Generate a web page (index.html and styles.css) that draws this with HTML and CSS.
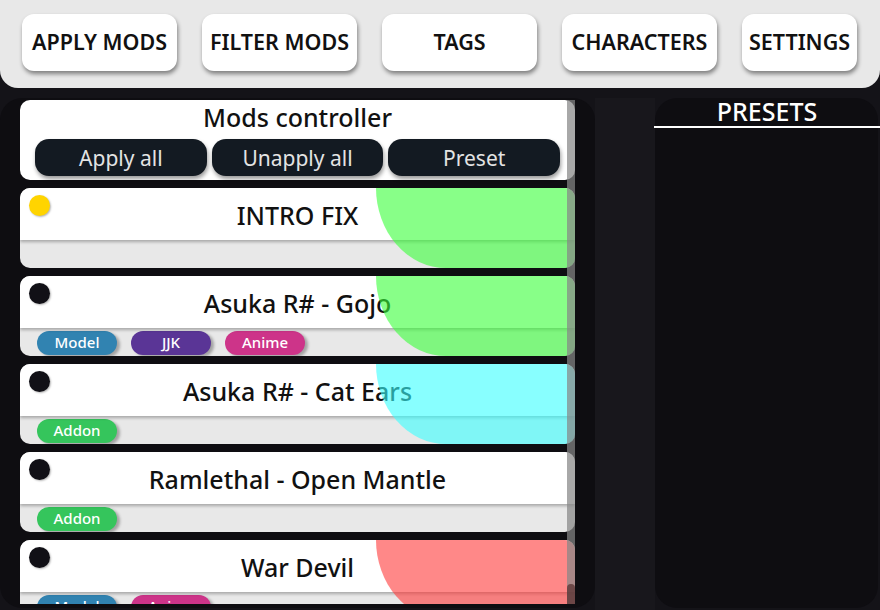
FILE: index.html
```html
<!DOCTYPE html>
<html>
<head>
<meta charset="utf-8">
<link rel="stylesheet" href="styles.css">
</head>
<body>
<header class="topbar">
  <button class="nav-btn">APPLY MODS</button>
  <button class="nav-btn">FILTER MODS</button>
  <button class="nav-btn">TAGS</button>
  <button class="nav-btn">CHARACTERS</button>
  <button class="nav-btn nav-btn-small">SETTINGS</button>
</header>
<main class="main">
  <section class="mods-panel">
    <div class="mods-list">
      <div class="controller">
        <div class="controller-title">Mods controller</div>
        <div class="controller-actions">
          <button class="ctl-btn">Apply all</button>
          <button class="ctl-btn">Unapply all</button>
          <button class="ctl-btn">Preset</button>
        </div>
      </div>

      <div class="mod-card">
        <div class="mod-head"><span class="dot dot-yellow"></span><span class="mod-title">INTRO FIX</span></div>
        <div class="mod-tags"></div>
        <div class="mod-flag flag-green"></div>
      </div>

      <div class="mod-card">
        <div class="mod-head"><span class="dot"></span><span class="mod-title">Asuka R# - Gojo</span></div>
        <div class="mod-tags">
          <span class="tag tag-model">Model</span>
          <span class="tag tag-jjk">JJK</span>
          <span class="tag tag-anime">Anime</span>
        </div>
        <div class="mod-flag flag-green"></div>
      </div>

      <div class="mod-card">
        <div class="mod-head"><span class="dot"></span><span class="mod-title">Asuka R# - Cat Ears</span></div>
        <div class="mod-tags">
          <span class="tag tag-addon">Addon</span>
        </div>
        <div class="mod-flag flag-cyan"></div>
      </div>

      <div class="mod-card">
        <div class="mod-head"><span class="dot"></span><span class="mod-title">Ramlethal - Open Mantle</span></div>
        <div class="mod-tags">
          <span class="tag tag-addon">Addon</span>
        </div>
      </div>

      <div class="mod-card">
        <div class="mod-head"><span class="dot"></span><span class="mod-title">War Devil</span></div>
        <div class="mod-tags">
          <span class="tag tag-model">Model</span>
          <span class="tag tag-anime">Anime</span>
        </div>
        <div class="mod-flag flag-red"></div>
      </div>

      <div class="scroll-track"><div class="scroll-thumb"></div></div>
    </div>
  </section>
  <div class="spacer"></div>
  <section class="presets-panel">
    <h2 class="presets-title">PRESETS</h2>
  </section>
</main>
</body>
</html>
```

FILE: styles.css
```css
* { box-sizing: border-box; }

html, body {
  margin: 0;
  padding: 0;
  width: 880px;
  height: 610px;
  overflow: hidden;
}

body {
  background: #141318;
  font-family: "Noto Sans", "Open Sans", sans-serif;
}

button {
  font-family: inherit;
  border: none;
  cursor: pointer;
}

.topbar {
  height: 88px;
  background: #e8e8e8;
  border-radius: 0 0 18px 18px;
  display: flex;
  gap: 25px;
  padding: 14px 0 0 22px;
}

.nav-btn {
  width: 155px;
  height: 57px;
  background: #ffffff;
  color: #111111;
  border-radius: 12px;
  font-size: 21.5px;
  font-weight: 600;
  box-shadow: 1px 3px 4px rgba(0, 0, 0, 0.45);
  padding: 0 0 2px 0;
}

.nav-btn-small { width: 115px; }

.main {
  display: flex;
  margin-top: 10px;
  height: 512px;
}

.mods-panel {
  width: 595px;
  height: 510px;
  background: #0e0d11;
  border-radius: 22px;
  padding: 2px 0 0 20px;
}

.mods-list {
  position: relative;
  width: 555px;
  height: 504px;
  overflow: hidden;
  display: flex;
  flex-direction: column;
  gap: 8px;
}

.controller {
  flex: none;
  height: 80px;
  background: #ffffff;
  border-radius: 10px;
  padding: 0 15px;
  display: flex;
  flex-direction: column;
  align-items: center;
}

.controller-title {
  font-size: 25px;
  line-height: 34px;
  color: #111;
  font-weight: 500;
}

.controller-actions {
  display: flex;
  gap: 5px;
  width: 100%;
  margin-top: 5px;
}

.ctl-btn {
  flex: 1;
  height: 37px;
  border-radius: 14px;
  background: #131a22;
  color: #e4e4e4;
  font-size: 21px;
  box-shadow: 1px 3px 4px rgba(0, 0, 0, 0.4);
  padding: 0;
}

.mod-card {
  flex: none;
  position: relative;
  height: 80px;
  border-radius: 10px;
  overflow: hidden;
  background: #e8e8e8;
  display: flex;
  flex-direction: column;
}

.mod-head {
  height: 52px;
  background: #ffffff;
  display: flex;
  align-items: center;
  justify-content: center;
  box-shadow: 0 2px 3px rgba(0, 0, 0, 0.28);
  position: relative;
  z-index: 1;
}

.mod-title {
  font-size: 25px;
  font-weight: 500;
  color: #111;
  line-height: 34px;
  margin-top: 1px;
}

.dot {
  position: absolute;
  left: 9px;
  top: 7px;
  width: 21px;
  height: 21px;
  border-radius: 50%;
  background: #111016;
  box-shadow: 1px 1px 2px rgba(0, 0, 0, 0.3);
}

.dot-yellow { background: #ffd400; }

.mod-tags {
  display: flex;
  gap: 14px;
  padding: 3px 0 0 17px;
}

.tag {
  width: 80px;
  height: 24px;
  border-radius: 12px;
  color: #ffffff;
  font-size: 15px;
  font-weight: 500;
  line-height: 23px;
  text-align: center;
  box-shadow: 3px 2px 3px rgba(0, 0, 0, 0.3);
}

.tag-model { background: #3183b1; }
.tag-jjk { background: #5a3596; }
.tag-anime { background: #cd3489; }
.tag-addon { background: #35c55c; }

.mod-flag {
  position: absolute;
  top: 0;
  right: 0;
  width: 199px;
  height: 80px;
  border-bottom-left-radius: 70px 80px;
  z-index: 2;
}

.flag-green { background: rgba(57, 255, 57, 0.6); }
.flag-cyan { background: rgba(57, 255, 255, 0.6); }
.flag-red { background: rgba(255, 57, 57, 0.6); }

.scroll-track {
  position: absolute;
  top: 0;
  right: 0;
  width: 8px;
  height: 100%;
  background: rgba(134, 134, 134, 0.72);
  z-index: 5;
}

.scroll-thumb {
  position: absolute;
  bottom: 0;
  left: 0;
  width: 8px;
  height: 20px;
  border-radius: 4px 4px 0 0;
  background: rgba(60, 20, 20, 0.55);
}

.spacer {
  width: 60px;
  background: #18171c;
}

.presets-panel {
  width: 223px;
  height: 510px;
  background: #0e0d11;
  border-radius: 22px;
}

.presets-title {
  margin: 0;
  height: 30px;
  border-bottom: 2px solid #ffffff;
  color: #ffffff;
  font-size: 25px;
  font-weight: 500;
  line-height: 26px;
  text-align: center;
  margin-left: -1px;
  margin-right: -2px;
}
```
